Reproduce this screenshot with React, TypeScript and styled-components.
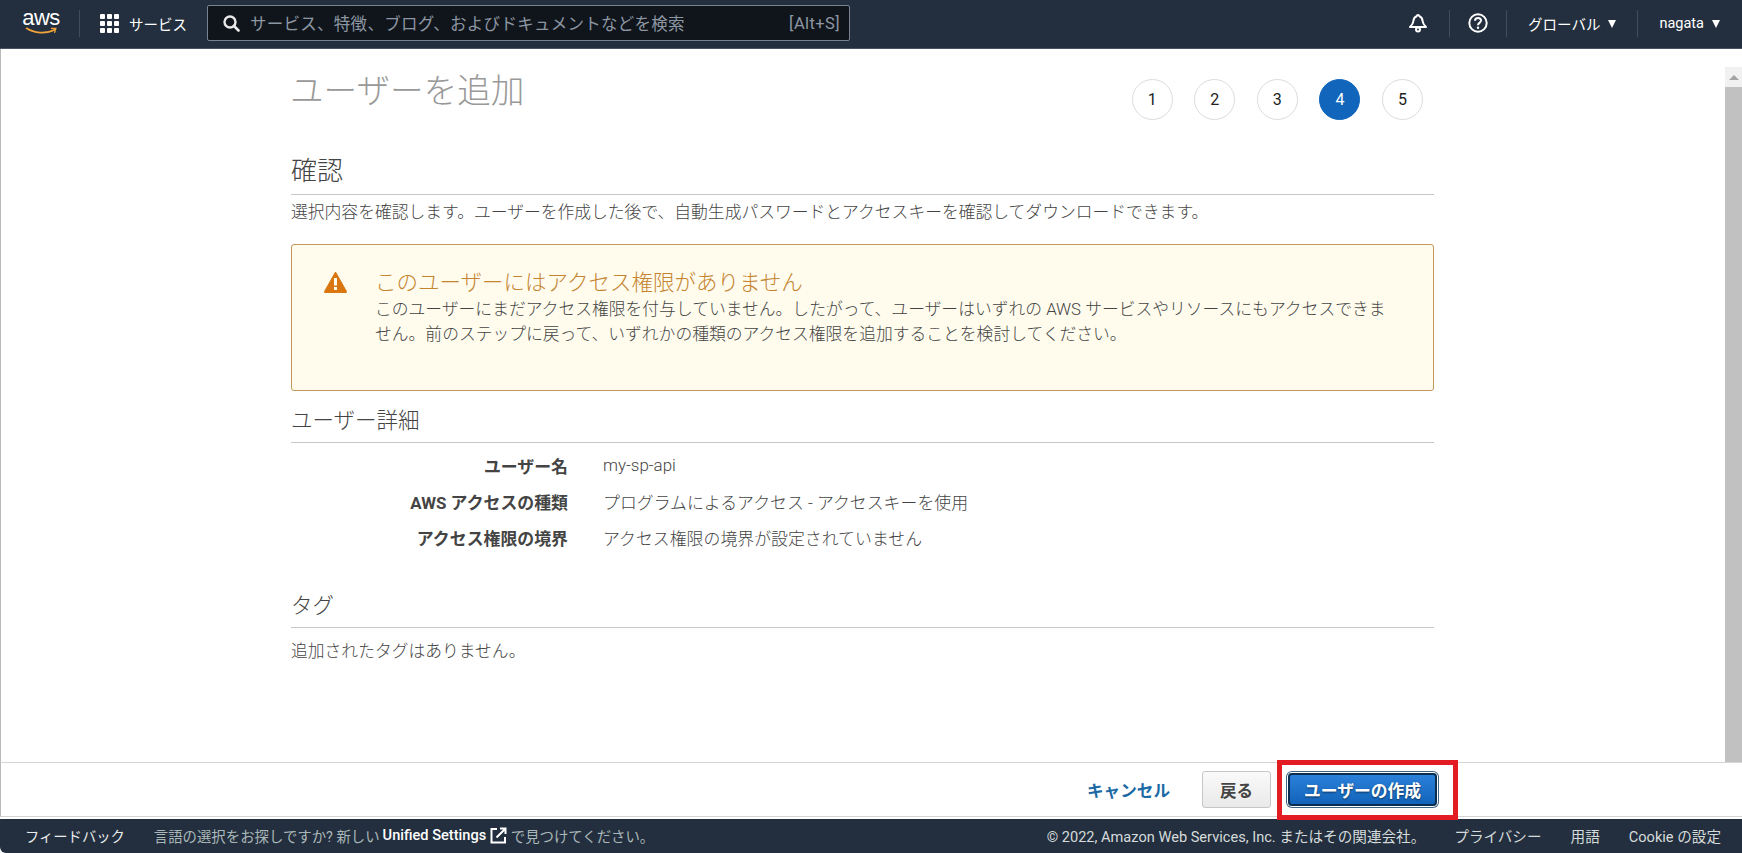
import React from "react";
import styled, { createGlobalStyle } from "styled-components";

const Global = createGlobalStyle`
  html, body { margin: 0; padding: 0; height: 100%; overflow: hidden; background: #fff; }
  #root { height: 100%; }
  * { box-sizing: border-box; }
  body { font-family: Roboto, "Noto Sans CJK JP", "Noto Sans", sans-serif; }
`;

const Page = styled.div`
  height: 853px; width: 1742px; display: flex; flex-direction: column; overflow: hidden;
`;
const TopBar = styled.header`
  height: 49px; flex: none; background: #232f3e; border-bottom: 1px solid #4a5361;
  display: flex; align-items: center; color: #fff; font-size: 14.5px; padding-left: 22px; padding-bottom: 2px;
`;
const Logo = styled.div`
  width: 38px; height: 27px; display: flex; flex-direction: column; align-items: center; line-height: 1;
  margin-top: -1px;
`;
const LogoWord = styled.span`
  font-family: "Liberation Sans", sans-serif; font-size: 22px; line-height: 18px; color: #fff; letter-spacing: -0.6px;
`;
const Divider = styled.span<{ $ml: number; $mr: number }>`
  width: 1px; height: 27px; background: #414d5c; margin-left: ${(p) => p.$ml}px; margin-right: ${(p) => p.$mr}px; flex: none;
`;
const GridIcon = styled.div`
  width: 19px; height: 19px; display: grid; grid-template-columns: repeat(3, 5px); grid-auto-rows: 5px; gap: 2px; margin-right: 10px;
  & > i { background: #fff; display: block; border-radius: 1px; }
`;
const ServiceLabel = styled.span`
  width: 58px; white-space: nowrap; font-size: 14.5px; margin-right: 20px;
`;
const SearchBox = styled.div`
  width: 643px; height: 36px; background: #10151c; border: 1px solid #78838f; border-radius: 2px;
  display: flex; align-items: center; padding: 0 9px 0 14px;
`;
const SearchText = styled.span`
  flex: 1; color: #8d97a3; font-size: 16.5px; letter-spacing: 0.27px; margin-left: 10px; white-space: nowrap;
`;
const Shortcut = styled.span`
  color: #8d97a3; font-size: 16.5px; letter-spacing: 0.4px;
`;
const TopRight = styled.div`
  margin-left: auto; display: flex; align-items: center; padding-right: 22px;
`;
const Caret = styled.span`
  width: 0; height: 0; border-left: 4.5px solid transparent; border-right: 4.5px solid transparent; border-top: 8px solid #fff; margin: 2px 0 0 8px;
`;
const MenuText = styled.span`
  font-size: 14.5px; white-space: nowrap; display: flex; align-items: center;
`;

const MainRow = styled.div`
  flex: 1; min-height: 0; display: flex; border-left: 1px solid #b9b9b9;
`;
const Content = styled.main`
  flex: 1; padding: 30px 0 0 290px; color: #444;
`;
const Inner = styled.div`
  width: 1143px;
`;
const TitleRow = styled.div`
  display: flex; justify-content: space-between; align-items: flex-start; height: 41px; padding-right: 11px;
`;
const Title = styled.h1`
  margin: -9px 0 0 -1px; font-size: 33.6px; line-height: 44px; font-weight: 300; color: #999;
`;
const Steps = styled.ol`
  list-style: none; margin: 0; padding: 0; display: flex; gap: 21.6px;
`;
const Step = styled.li<{ $active?: boolean }>`
  width: 41px; height: 41px; border-radius: 50%; display: flex; align-items: center; justify-content: center;
  font-size: 16px; color: ${(p) => (p.$active ? "#fff" : "#222")};
  background: ${(p) => (p.$active ? "#1166bb" : "#fff")};
  border: 1px solid ${(p) => (p.$active ? "#1166bb" : "#dcdcdc")};
`;
const SectionHead = styled.h2<{ $mt: number; $size?: number; $lh?: number }>`
  margin: ${(p) => p.$mt}px 0 0; font-weight: 300; color: #444; font-size: ${(p) => p.$size ?? 21.5}px; line-height: ${(p) => p.$lh ?? 34}px;
  border-bottom: 1px solid #c8c8c8; padding-bottom: 4px; height: 39px;
`;
const Para = styled.p<{ $mt: number }>`
  margin: ${(p) => p.$mt}px 0 0; font-size: 16.8px; line-height: 24px; color: #444; font-weight: 300; white-space: nowrap;
`;
const Alert = styled.section`
  margin-top: 20px; height: 147px; background: #fffcee; border: 1px solid #c4975a; border-radius: 3px;
  display: flex; padding: 25px 0 0 32px;
`;
const AlertIcon = styled.div`
  width: 23px; height: 22px; flex: none; margin-right: 28px; margin-top: 1px;
`;
const AlertBody = styled.div`
  width: 1020px;
`;
const AlertTitle = styled.div`
  color: #c5842f; font-size: 21.5px; line-height: 26px; font-weight: 300; white-space: nowrap;
`;
const AlertText = styled.div`
  font-size: 16.8px; line-height: 25px; color: #444; font-weight: 300; margin-top: 1px;
`;
const DetailGrid = styled.dl`
  margin: 4px 0 0; display: grid; grid-template-columns: 277px 1fr; column-gap: 35px; grid-auto-rows: 36.4px; align-items: center;
`;
const Term = styled.dt`
  text-align: right; font-weight: 700; font-size: 16.9px; color: #444; white-space: nowrap;
`;
const Desc = styled.dd`
  margin: 0; font-size: 16.9px; font-weight: 300; color: #444; white-space: nowrap;
`;

const ScrollTrack = styled.div`
  width: 17px; flex: none; padding-top: 18px; display: flex; flex-direction: column; background: #fff;
`;
const ScrollUp = styled.div`
  height: 20px; background: #f1f1f1; display: flex; align-items: center; justify-content: center;
  &::before { content: ""; border-left: 5px solid transparent; border-right: 5px solid transparent; border-bottom: 5px solid #a3a3a3; }
`;
const ScrollThumb = styled.div`
  flex: 1; background: #c1c1c1;
`;

const ActionBar = styled.div`
  position: relative; height: 55px; flex: none; background: #fff; border-top: 1px solid #d5d5d5; border-bottom: 1px solid #d5d5d5;
  border-left: 1px solid #b9b9b9; display: flex; align-items: center; justify-content: flex-end; padding: 0 305px 0 0; margin-bottom: 2px;
`;
const CancelLink = styled.a`
  color: #1b6aa5; font-weight: 700; font-size: 16.6px; margin-right: 32px; white-space: nowrap;
`;
const BackButton = styled.button`
  width: 69px; height: 37px; font: inherit; font-weight: 700; font-size: 16.5px; color: #444; border: 1px solid #c6c6c6; border-radius: 3px;
  background: linear-gradient(#fafafa, #e9e9e9); margin-right: 17px; padding: 0;
`;
const CreateButton = styled.button`
  width: 149px; height: 33px; font: inherit; font-weight: 700; font-size: 16.8px; color: #fff; padding: 0; white-space: nowrap;
  border: 2px solid #0b2d4f; border-radius: 4px; box-shadow: 0 0 0 1px #fff, 0 0 0 2px #3f6482;
  background: linear-gradient(#2b80d9, #1264ba); text-shadow: 0 1px 2px rgba(0, 0, 0, 0.55);
`;
const Highlight = styled.div`
  position: absolute; left: 1276px; top: -3px; width: 181px; height: 60px; border: 5px solid #e31b23; pointer-events: none;
`;

const Footer = styled.footer`
  height: 34px; flex: none; background: #232f3e; border-radius: 0 0 0 6px; display: flex; align-items: center;
  padding: 0 21px 2px 25px; font-size: 14.6px; color: #d5dbdb; white-space: nowrap;
`;
const FeedBack = styled.span`
  color: #eaeded; margin-right: 29px; font-size: 14.3px;
`;
const LangNote = styled.span`
  color: #aab7b8; display: flex; align-items: center; font-size: 14.4px;
`;
const Strong = styled.b`
  color: #fff; font-weight: 500; margin-left: 3px; display: flex; align-items: center; gap: 4px; font-size: 14.6px;
`;
const FooterRight = styled.div`
  margin-left: auto; display: flex; gap: 29px;
`;

const Search = () => (
  <svg width="18" height="18" viewBox="0 0 18 18" fill="none">
    <circle cx="8" cy="8" r="5.5" stroke="#e8e8e8" strokeWidth="2.4" />
    <path d="M12 12l4.5 4.5" stroke="#e8e8e8" strokeWidth="2.6" strokeLinecap="round" />
  </svg>
);
const Bell = () => (
  <svg width="20" height="20" viewBox="0 0 20 20" fill="none" stroke="#fff" strokeWidth="2" strokeLinejoin="round">
    <path d="M10 2c-.9 0-1.2.6-1.3 1.2C6.300 3.900 5.600 5.800 5.400 8c-.2 2.200-1 3.800-3.400 6h16c-2.400-2.200-3.200-3.800-3.400-6-.2-2.200-.9-4.100-3.300-4.800C11.200 2.600 10.900 2 10 2z" />
    <circle cx="10" cy="16.500" r="2" />
  </svg>
);
const Help = () => (
  <svg width="20" height="20" viewBox="0 0 20 20" fill="none">
    <circle cx="10" cy="10" r="8.700" stroke="#fff" strokeWidth="2" />
    <path d="M7 7.800c0-1.800 1.300-2.800 3-2.800s3 1 3 2.600c0 2.300-3 2.300-3 4.600" stroke="#fff" strokeWidth="2" />
    <circle cx="10" cy="14.700" r="1.200" fill="#fff" />
  </svg>
);
const Warn = () => (
  <svg width="23" height="22" viewBox="0 0 23 22">
    <path d="M11.500 1L22.500 20.500a.6.6 0 0 1-.5 1H1a.6.6 0 0 1-.5-1z" fill="#d9760f" stroke="#d9760f" strokeLinejoin="round" />
    <rect x="10" y="7" width="3" height="7.500" fill="#fffcee" />
    <rect x="10" y="16" width="3" height="3" fill="#fffcee" />
  </svg>
);
const External = () => (
  <svg width="17" height="17" viewBox="0 0 17 17" fill="none" stroke="#fff" strokeWidth="2">
    <path d="M7 2H1.500v13.500H15V10" />
    <path d="M6.500 10.500L15 2M10 1.500h5.500V7" />
  </svg>
);

export default function App() {
  return (
    <Page>
      <Global />
      <TopBar>
        <Logo>
          <LogoWord>aws</LogoWord>
          <svg width="36" height="10" viewBox="0 0 36 10" fill="none">
            <path d="M2 1.500C10 7 24 8 33 3" stroke="#f2a33a" strokeWidth="2" strokeLinecap="round" />
            <path d="M29 1.500l5.500 0-1.500 5" stroke="#f2a33a" strokeWidth="1.500" fill="none" />
          </svg>
        </Logo>
        <Divider $ml={19} $mr={20} />
        <GridIcon>{Array.from({ length: 9 }, (_, i) => <i key={i} />)}</GridIcon>
        <ServiceLabel>サービス</ServiceLabel>
        <SearchBox>
          <Search />
          <SearchText>サービス、特徴、ブログ、およびドキュメントなどを検索</SearchText>
          <Shortcut>[Alt+S]</Shortcut>
        </SearchBox>
        <TopRight>
          <Bell />
          <Divider $ml={21} $mr={18} />
          <Help />
          <Divider $ml={18} $mr={21} />
          <MenuText>グローバル<Caret /></MenuText>
          <Divider $ml={21} $mr={21} />
          <MenuText>nagata<Caret /></MenuText>
        </TopRight>
      </TopBar>
      <MainRow>
        <Content>
          <Inner>
            <TitleRow>
              <Title>ユーザーを追加</Title>
              <Steps>
                <Step>1</Step>
                <Step>2</Step>
                <Step>3</Step>
                <Step $active>4</Step>
                <Step>5</Step>
              </Steps>
            </TitleRow>
            <SectionHead $mt={36} $size={26} $lh={30}>確認</SectionHead>
            <Para $mt={5}>選択内容を確認します。ユーザーを作成した後で、自動生成パスワードとアクセスキーを確認してダウンロードできます。</Para>
            <Alert>
              <AlertIcon><Warn /></AlertIcon>
              <AlertBody>
                <AlertTitle>このユーザーにはアクセス権限がありません</AlertTitle>
                <AlertText>
                  このユーザーにまだアクセス権限を付与していません。したがって、ユーザーはいずれの AWS サービスやリソースにもアクセスできません。前のステップに戻って、いずれかの種類のアクセス権限を追加することを検討してください。
                </AlertText>
              </AlertBody>
            </Alert>
            <SectionHead $mt={13}>ユーザー詳細</SectionHead>
            <DetailGrid>
              <Term>ユーザー名</Term><Desc>my-sp-api</Desc>
              <Term>AWS アクセスの種類</Term><Desc>プログラムによるアクセス - アクセスキーを使用</Desc>
              <Term>アクセス権限の境界</Term><Desc>アクセス権限の境界が設定されていません</Desc>
            </DetailGrid>
            <SectionHead $mt={33}>タグ</SectionHead>
            <Para $mt={11}>追加されたタグはありません。</Para>
          </Inner>
        </Content>
        <ScrollTrack>
          <ScrollUp />
          <ScrollThumb />
        </ScrollTrack>
      </MainRow>
      <ActionBar>
        <CancelLink>キャンセル</CancelLink>
        <BackButton>戻る</BackButton>
        <CreateButton>ユーザーの作成</CreateButton>
        <Highlight />
      </ActionBar>
      <Footer>
        <FeedBack>フィードバック</FeedBack>
        <LangNote>言語の選択をお探しですか? 新しい<Strong>Unified Settings <External /></Strong>&nbsp;で見つけてください。</LangNote>
        <FooterRight>
          <span>© 2022, Amazon Web Services, Inc. またはその関連会社。</span>
          <span>プライバシー</span>
          <span>用語</span>
          <span>Cookie の設定</span>
        </FooterRight>
      </Footer>
    </Page>
  );
}
